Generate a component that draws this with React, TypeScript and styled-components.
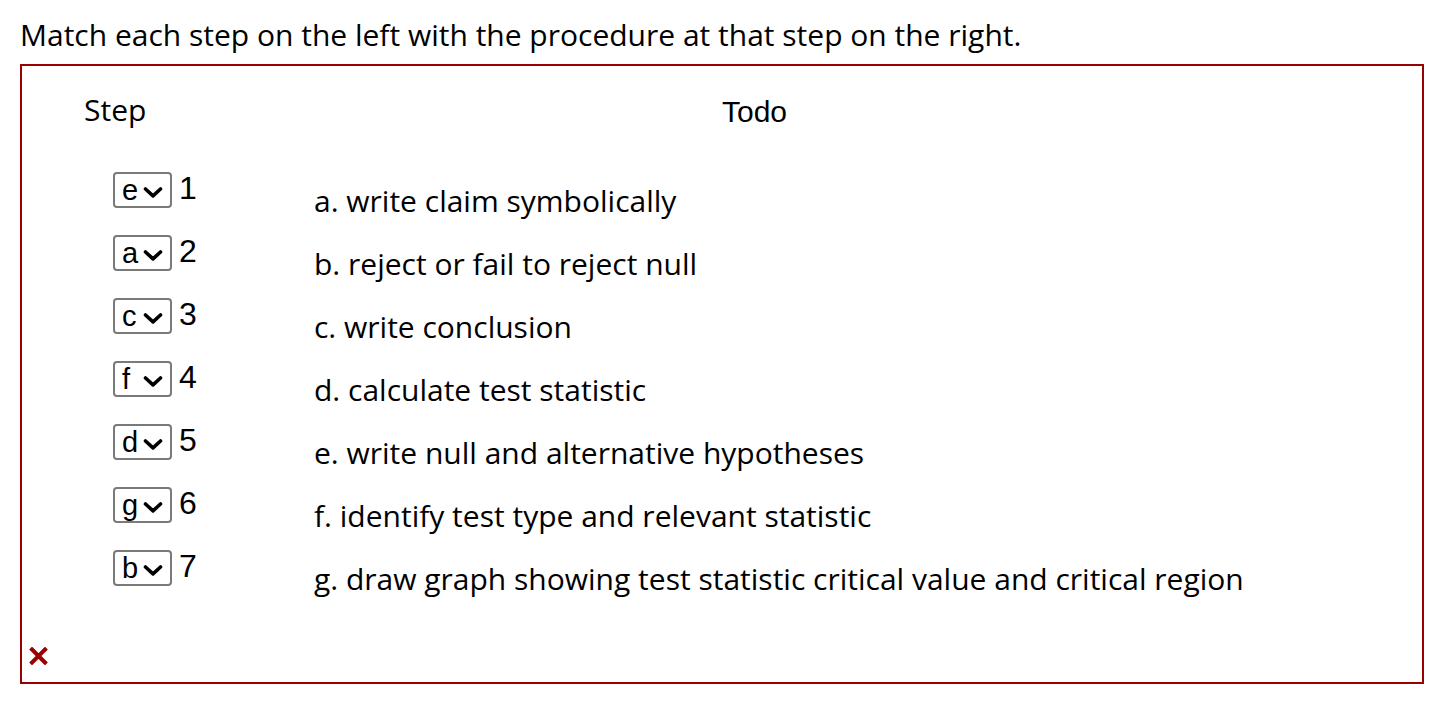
import React, { useState } from 'react'
import styled, { createGlobalStyle } from 'styled-components'

const colors = {
  BLACK: '#000000',
  DARK_RED: '#9b0000',
  SELECT_BORDER: '#7a7a7a',
}

type IMatchRow = {
  step: number
  answer: string
  todo: string
}

const matchRows: IMatchRow[] = [
  { step: 1, answer: 'e', todo: 'a. write claim symbolically' },
  { step: 2, answer: 'a', todo: 'b. reject or fail to reject null' },
  { step: 3, answer: 'c', todo: 'c. write conclusion' },
  { step: 4, answer: 'f', todo: 'd. calculate test statistic' },
  { step: 5, answer: 'd', todo: 'e. write null and alternative hypotheses' },
  { step: 6, answer: 'g', todo: 'f. identify test type and relevant statistic' },
  { step: 7, answer: 'b', todo: 'g. draw graph showing test statistic critical value and critical region' },
]

const letters = ['a', 'b', 'c', 'd', 'e', 'f', 'g']

const GlobalStyle = createGlobalStyle`
  html, body {
    margin: 0;
    padding: 0;
    background: #ffffff;
  }
  body {
    font-family: "Open Sans", "Liberation Sans", sans-serif;
    color: ${colors.BLACK};
  }
`

const ChevronDown = () => (
  <svg width="20" height="11" viewBox="0 0 20 11">
    <path d="M2.5 2 L10 8.8 L17.5 2" fill="none" stroke="#000" strokeWidth="3.6" strokeLinecap="round" strokeLinejoin="round" />
  </svg>
)

const WrongMark = () => (
  <svg width="19" height="18" viewBox="0 0 19 18">
    <path d="M3 2.5 L16 15.5 M16 2.5 L3 15.5" stroke={colors.DARK_RED} strokeWidth="4" strokeLinecap="square" />
  </svg>
)

const App = () => {
  const [answers, setAnswers] = useState<string[]>(matchRows.map((row) => row.answer))

  const onChangeAnswer = (index: number, value: string) => {
    const next = [...answers]
    next[index] = value
    setAnswers(next)
  }

  return (
    <>
      <GlobalStyle />
      <Page>
        <Prompt>Match each step on the left with the procedure at that step on the right.</Prompt>
        <MatchBox>
          <MatchTable>
            <StepHeader>Step</StepHeader>
            <TodoHeader>Todo</TodoHeader>
            {matchRows.map((row, index) => (
              <React.Fragment key={row.step}>
                <StepCell>
                  <SelectBox>
                    <SelectValue>{answers[index]}</SelectValue>
                    <ChevronWrap>
                      <ChevronDown />
                    </ChevronWrap>
                    <HiddenSelect
                      value={answers[index]}
                      onChange={(e) => onChangeAnswer(index, e.target.value)}
                    >
                      {letters.map((letter) => (
                        <option key={letter} value={letter}>{letter}</option>
                      ))}
                    </HiddenSelect>
                  </SelectBox>
                  <StepNumber>{row.step}</StepNumber>
                </StepCell>
                <TodoCell>{row.todo}</TodoCell>
              </React.Fragment>
            ))}
          </MatchTable>
          <Feedback>
            <WrongMark />
          </Feedback>
        </MatchBox>
      </Page>
    </>
  )
}

const Page = styled.div`
  padding: 15px 12px 0 20px;
`

const Prompt = styled.div`
  font-size: 30px;
  line-height: 40px;
  margin-bottom: 9px;
`

const MatchBox = styled.div`
  width: 1400px;
  height: 616px;
  border: 2px solid ${colors.DARK_RED};
  display: flex;
  flex-direction: column;
  justify-content: space-between;
`

const MatchTable = styled.div`
  display: grid;
  grid-template-columns: 270px 1fr;
  grid-template-rows: 82px;
  grid-auto-rows: 63px;
  padding-top: 24px;
`

const StepHeader = styled.div`
  font-size: 30px;
  line-height: 40px;
  padding-left: 62px;
`

const TodoHeader = styled.div`
  font-family: "Liberation Sans", Arial, sans-serif;
  font-size: 30px;
  line-height: 40px;
  padding: 2px 0 0 430px;
`

const StepCell = styled.div`
  display: flex;
  align-items: flex-start;
  padding-left: 91px;
`

const SelectBox = styled.label`
  position: relative;
  box-sizing: border-box;
  width: 59px;
  height: 36px;
  border: 2px solid ${colors.SELECT_BORDER};
  border-radius: 4px;
  display: flex;
  align-items: center;
  gap: 5px;
  padding-left: 7px;
  font-family: "Liberation Sans", Arial, sans-serif;
  font-size: 29px;
  cursor: pointer;
`

const SelectValue = styled.span`
  line-height: 1;
  margin-top: 1px;
  width: 16px;
`

const ChevronWrap = styled.span`
  display: flex;
  margin-top: 4px;
`

const HiddenSelect = styled.select`
  position: absolute;
  inset: 0;
  opacity: 0;
  cursor: pointer;
`

const StepNumber = styled.span`
  font-family: "Liberation Sans", Arial, sans-serif;
  font-size: 32px;
  line-height: 36px;
  margin-left: 7px;
  margin-top: -2px;
`

const TodoCell = styled.div`
  font-size: 30px;
  line-height: 40px;
  padding-left: 22px;
  padding-top: 9px;
`

const Feedback = styled.div`
  padding: 0 0 17px 7px;
  display: flex;
`

export default App
